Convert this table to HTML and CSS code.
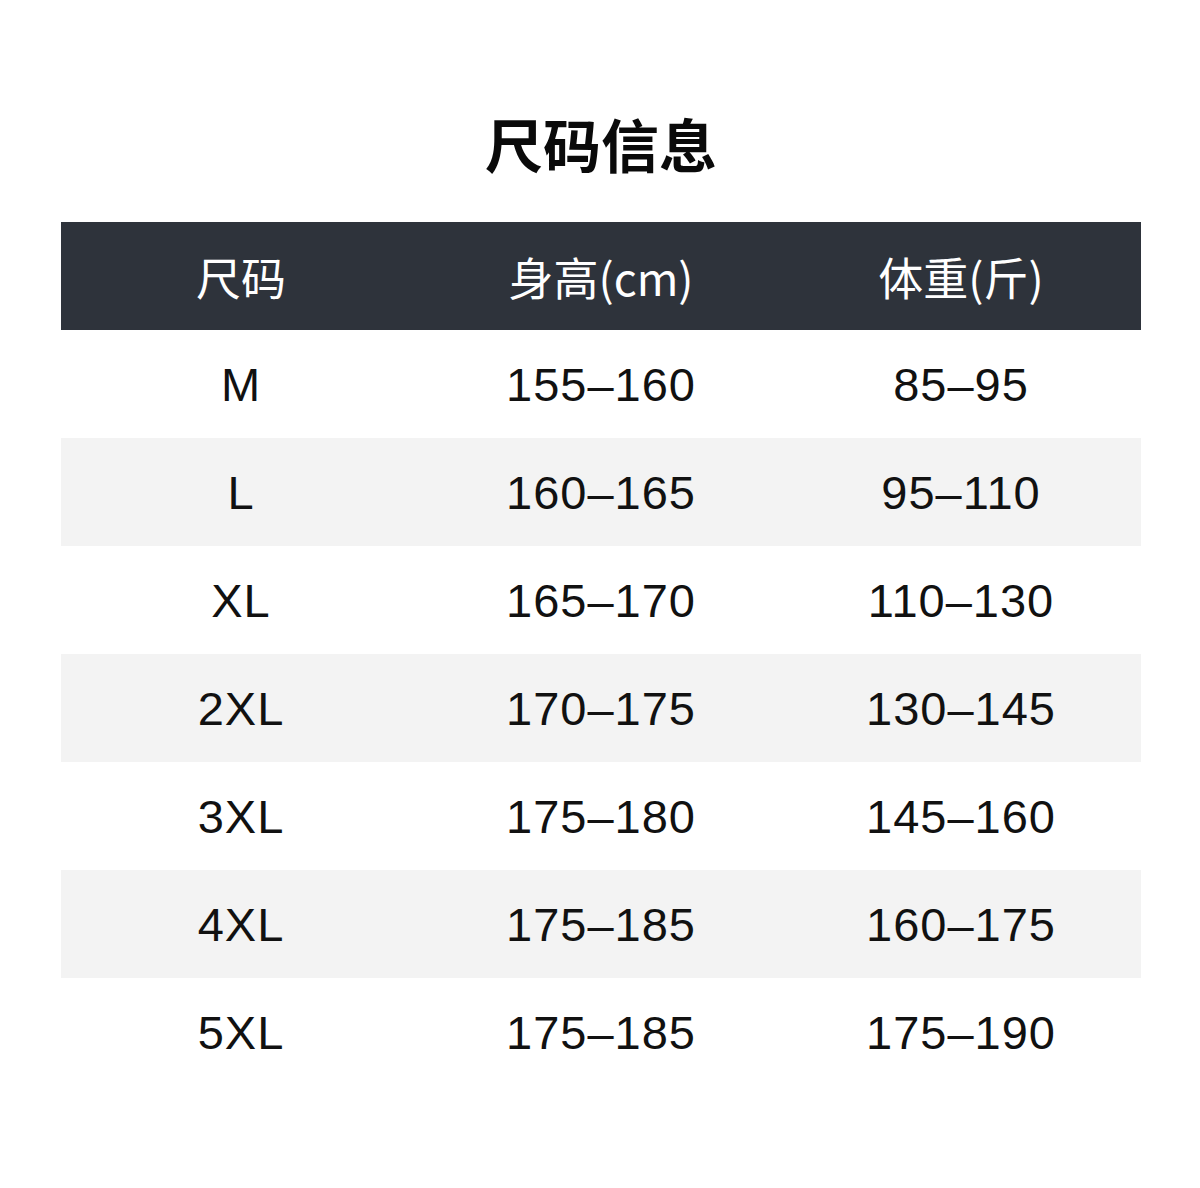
FILE: index.html
```html
<!DOCTYPE html>
<html lang="zh-CN">
<head>
<meta charset="utf-8">
<title>尺码信息</title>
<link rel="stylesheet" href="styles.css">
</head>
<body>
<main class="page">
  <h1 class="title">尺码信息</h1>
  <div class="table">
    <div class="row head">
      <div class="cell">尺码</div>
      <div class="cell">身高(cm)</div>
      <div class="cell">体重(斤)</div>
    </div>
    <div class="row">
      <div class="cell">M</div>
      <div class="cell">155–160</div>
      <div class="cell">85–95</div>
    </div>
    <div class="row alt">
      <div class="cell">L</div>
      <div class="cell">160–165</div>
      <div class="cell">95–110</div>
    </div>
    <div class="row">
      <div class="cell">XL</div>
      <div class="cell">165–170</div>
      <div class="cell">110–130</div>
    </div>
    <div class="row alt">
      <div class="cell">2XL</div>
      <div class="cell">170–175</div>
      <div class="cell">130–145</div>
    </div>
    <div class="row">
      <div class="cell">3XL</div>
      <div class="cell">175–180</div>
      <div class="cell">145–160</div>
    </div>
    <div class="row alt">
      <div class="cell">4XL</div>
      <div class="cell">175–185</div>
      <div class="cell">160–175</div>
    </div>
    <div class="row">
      <div class="cell">5XL</div>
      <div class="cell">175–185</div>
      <div class="cell">175–190</div>
    </div>
  </div>
</main>
</body>
</html>
```

FILE: styles.css
```css
html, body {
  margin: 0;
  padding: 0;
  background: #ffffff;
}

.page {
  width: 1080px;
  padding: 114px 0 0 61px;
  font-family: "Liberation Sans", Arial, "Noto Sans CJK SC", sans-serif;
  color: #111111;
}

.title {
  margin: 0 0 50px 0;
  height: 58px;
  font-family: "Noto Sans CJK SC", sans-serif;
  font-size: 58px;
  line-height: 58px;
  font-weight: 700;
  text-align: center;
  color: #0a0a0a;
  letter-spacing: 0;
}

.table {
  display: flex;
  flex-direction: column;
}

.row {
  display: grid;
  grid-template-columns: repeat(3, 1fr);
  height: 108px;
  align-items: center;
  background: #ffffff;
}

.row.alt {
  background: #f3f3f3;
}

.row.head {
  background: #2e333b;
  color: #ffffff;
}

.cell {
  text-align: center;
  font-size: 47px;
  line-height: 1;
  letter-spacing: 1px;
}

.head .cell {
  font-family: "Noto Sans CJK SC", sans-serif;
  font-size: 45px;
  font-weight: 400;
  letter-spacing: 0;
}
```
